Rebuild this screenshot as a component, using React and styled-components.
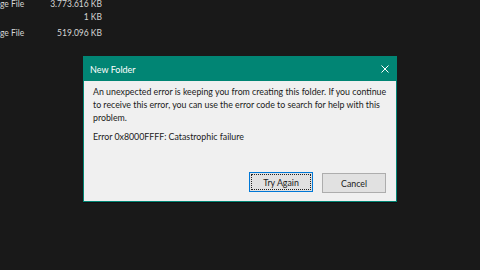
import styled, { createGlobalStyle } from 'styled-components';

const GlobalStyle = createGlobalStyle`
  html, body {
    margin: 0;
    padding: 0;
    background: #191919;
    overflow: hidden;
  }
  body {
    width: 480px;
    height: 270px;
    font-family: Lato, "Noto Sans", sans-serif;
  }
`;

const Screen = styled.div`
  width: 480px;
  height: 270px;
  background: #191919;
  display: flex;
  flex-direction: column;
`;

const FileList = styled.div`
  display: flex;
  flex-direction: column;
  width: 102px;
  margin-top: -3px;
  height: 48px;
`;

const FileRow = styled.div`
  display: flex;
  justify-content: space-between;
  height: ${props => props.$h || 14}px;
  line-height: ${props => props.$h || 14}px;
  font-size: 8.5px;
  color: #d6d6d6;
  white-space: nowrap;
`;

const Dialog = styled.div`
  margin-left: 83px;
  margin-top: 11px;
  width: 312px;
  border: 1px solid #018574;
  background: #f0f0f0;
  box-shadow: 0 1px 0 #101010;
  display: flex;
  flex-direction: column;
`;

const TitleBar = styled.div`
  height: 24px;
  background: #018574;
  display: flex;
  align-items: center;
  justify-content: space-between;
  padding: 0 7px 0 6px;
  color: #ffffff;
  font-size: 9px;
`;

const CloseIcon = styled.svg`
  width: 8px;
  height: 8px;
  display: block;
`;

const Body = styled.div`
  height: 120px;
  box-sizing: border-box;
  padding: 4px 8px 8px 9px;
  display: flex;
  flex-direction: column;
  font-size: 8.8px;
  line-height: 13px;
  color: #1a1a1a;
`;

const Message = styled.p`
  margin: 0 0 6px 0;
`;

const Buttons = styled.div`
  margin-top: auto;
  display: flex;
  justify-content: flex-end;
  gap: 9px;
  padding-right: 2px;
`;

const Button = styled.button`
  width: 64px;
  height: 20px;
  box-sizing: border-box;
  padding: 0;
  font-family: inherit;
  font-size: 8.8px;
  color: #1a1a1a;
  background: #e1e1e1;
  border: 1px solid ${props => (props.$primary ? '#0078d7' : '#adadad')};
  outline: ${props => (props.$primary ? '1px dotted #222' : 'none')};
  outline-offset: -3px;
  margin-top: ${props => (props.$primary ? '0' : '1px')};
`;

export default function App() {
  return (
    <Screen>
      <GlobalStyle />
      <FileList>
        <FileRow $h={14}><span>ge File</span><span>3.773.616 KB</span></FileRow>
        <FileRow $h={12}><span></span><span>1 KB</span></FileRow>
        <FileRow $h={20}><span>ge File</span><span>519.096 KB</span></FileRow>
      </FileList>
      <Dialog>
        <TitleBar>
          <span>New Folder</span>
          <CloseIcon viewBox="0 0 8 8">
            <path d="M0.5 0.5 L7.5 7.5 M7.5 0.5 L0.5 7.5" stroke="#ffffff" strokeWidth="1" />
          </CloseIcon>
        </TitleBar>
        <Body>
          <Message>
            An unexpected error is keeping you from creating this folder. If you continue
            to receive this error, you can use the error code to search for help with this
            problem.
          </Message>
          <Message>Error 0x8000FFFF: Catastrophic failure</Message>
          <Buttons>
            <Button $primary>Try Again</Button>
            <Button>Cancel</Button>
          </Buttons>
        </Body>
      </Dialog>
    </Screen>
  );
}
